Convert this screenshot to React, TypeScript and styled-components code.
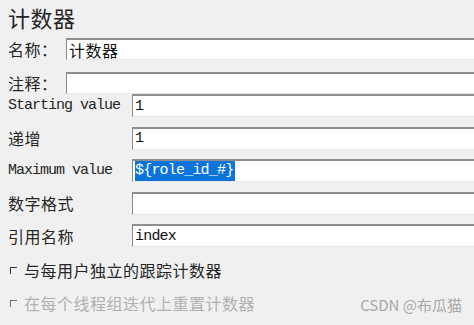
import styled, { createGlobalStyle } from 'styled-components'

const GlobalStyle = createGlobalStyle`
  html, body {
    margin: 0;
    padding: 0;
    overflow: hidden;
    background: #f0f0f0;
  }
`

const cjk = `"Noto Sans CJK SC", "Noto Sans", sans-serif`
const mono = `"Liberation Mono", "Noto Sans CJK SC", monospace`

const Page = styled.div`
  position: relative;
  box-sizing: border-box;
  width: 474px;
  height: 325px;
  padding: 4px 0 0 8px;
  display: flex;
  flex-direction: column;
  background: #f0f0f0;
  color: #262626;
  overflow: hidden;
`

const Title = styled.div`
  font-family: ${cjk};
  font-size: 22px;
  line-height: 26px;
  height: 26px;
  letter-spacing: 0.5px;
`

const FormGrid = styled.div<{ $labelWidth: number; $rowHeight: number; $gap: number; $top: number }>`
  display: grid;
  grid-template-columns: ${(p) => p.$labelWidth}px 1fr;
  grid-auto-rows: ${(p) => p.$rowHeight}px;
  row-gap: ${(p) => p.$gap}px;
  margin-top: ${(p) => p.$top}px;
  align-items: center;
`

const Label = styled.span<{ $latin?: boolean }>`
  font-family: ${(p) => (p.$latin ? mono : cjk)};
  font-size: ${(p) => (p.$latin ? '15px' : '16px')};
  letter-spacing: ${(p) => (p.$latin ? '-1px' : '0.5px')};
  white-space: nowrap;
  line-height: 20px;
`

const Field = styled.div<{ $latin?: boolean }>`
  box-sizing: border-box;
  height: 100%;
  margin-right: -20px;
  display: flex;
  align-items: center;
  padding-left: 2px;
  background: #ffffff;
  border-top: 2px solid #8e8e8e;
  border-left: 1px solid #8a8a8a;
  border-bottom: 1px solid #e6e6e6;
  font-family: ${(p) => (p.$latin ? mono : cjk)};
  font-size: ${(p) => (p.$latin ? '15px' : '16px')};
  letter-spacing: ${(p) => (p.$latin ? '-0.8px' : '0.5px')};
  color: #111;
  white-space: nowrap;
`

const Selected = styled.span`
  background: #0a74dc;
  color: #ffffff;
  line-height: 20px;
  padding-right: 2px;
`

const CheckRow = styled.div<{ $disabled?: boolean }>`
  display: flex;
  align-items: center;
  gap: 7px;
  height: 20px;
  margin-top: 13px;
  padding-left: 2px;
  font-family: ${cjk};
  font-size: 16px;
  letter-spacing: 0.5px;
  color: ${(p) => (p.$disabled ? '#b0b0b0' : '#262626')};
`

const CheckBox = styled.span<{ $disabled?: boolean }>`
  box-sizing: border-box;
  width: 7px;
  height: 7px;
  margin-top: 1px;
  border-top: 1.5px solid ${(p) => (p.$disabled ? '#707070' : '#333333')};
  border-left: 1.5px solid ${(p) => (p.$disabled ? '#707070' : '#333333')};
`

const Watermark = styled.div`
  position: absolute;
  right: 12px;
  bottom: 11px;
  font-family: ${cjk};
  font-size: 15px;
  line-height: 18px;
  color: #a8a8a8;
`

export default function App() {
  return (
    <>
      <GlobalStyle />
      <Page>
        <Title>计数器</Title>
        <FormGrid $labelWidth={58} $rowHeight={22} $gap={12} $top={8}>
          <Label>名称：</Label>
          <Field>计数器</Field>
          <Label>注释：</Label>
          <Field />
        </FormGrid>
        <FormGrid $labelWidth={124} $rowHeight={23} $gap={9.5} $top={0}>
          <Label $latin>Starting value</Label>
          <Field $latin>1</Field>
          <Label>递增</Label>
          <Field $latin>1</Field>
          <Label $latin>Maximum value</Label>
          <Field $latin>
            <Selected>{'${role_id_#}'}</Selected>
          </Field>
          <Label>数字格式</Label>
          <Field $latin />
          <Label>引用名称</Label>
          <Field $latin>index</Field>
        </FormGrid>
        <CheckRow>
          <CheckBox />
          与每用户独立的跟踪计数器
        </CheckRow>
        <CheckRow $disabled>
          <CheckBox $disabled />
          在每个线程组迭代上重置计数器
        </CheckRow>
        <Watermark>CSDN @布瓜猫</Watermark>
      </Page>
    </>
  )
}
